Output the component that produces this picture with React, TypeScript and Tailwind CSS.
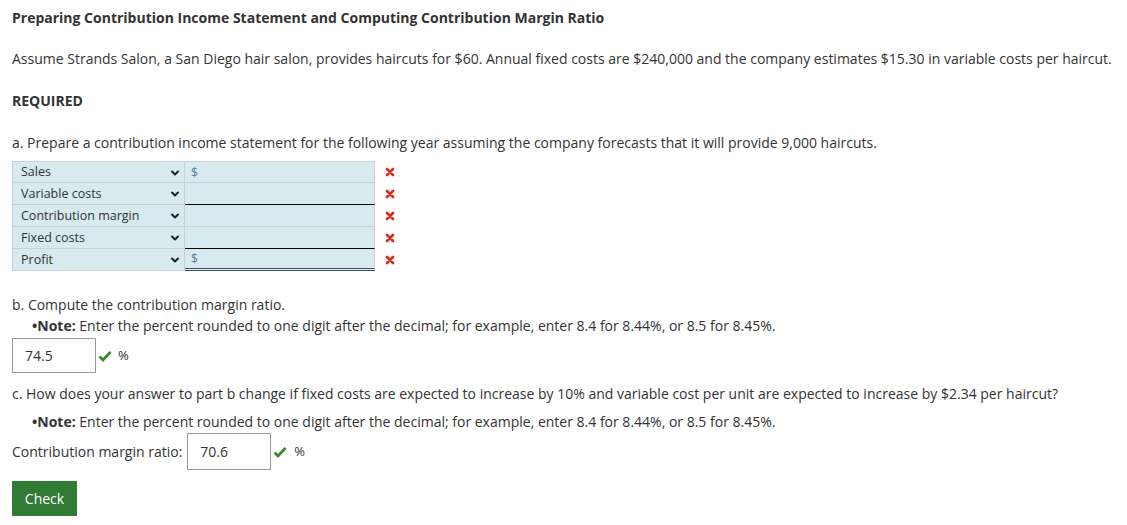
import { ChevronDown } from 'lucide-react';

const rows = [
  { label: 'Sales', dollar: true, line: '' },
  { label: 'Variable costs', dollar: false, line: 'single' },
  { label: 'Contribution margin', dollar: false, line: '' },
  { label: 'Fixed costs', dollar: false, line: 'single' },
  { label: 'Profit', dollar: true, line: 'double' },
];

function Cross() {
  return (
    <svg width="10" height="10" viewBox="0 0 10 10" className="shrink-0">
      <path d="M2 2 L8 8 M8 2 L2 8" stroke="#d4301e" strokeWidth="2.8" strokeLinecap="round" />
    </svg>
  );
}

function Check() {
  return (
    <svg width="14" height="12" viewBox="0 0 14 12" className="shrink-0">
      <path d="M1.5 6.5 L5 10 L12.5 2" fill="none" stroke="#3a8a2a" strokeWidth="2.8" />
    </svg>
  );
}

export default function App() {
  return (
    <div className="min-h-screen bg-white px-3 pt-[8px] text-[14px] text-[#333]" style={{ fontFamily: '"Open Sans", sans-serif' }}>
      <h1 className="text-[14px] font-bold leading-[20px]">Preparing Contribution Income Statement and Computing Contribution Margin Ratio</h1>
      <p className="mt-[21px] leading-[20px]">
        Assume Strands Salon, a San Diego hair salon, provides haircuts for $60. Annual fixed costs are $240,000 and the company estimates $15.30 in variable costs per haircut.
      </p>
      <h2 className="mt-[22px] text-[14px] font-bold leading-[20px]">REQUIRED</h2>
      <p className="mt-[22px] leading-[20px]">a. Prepare a contribution income statement for the following year assuming the company forecasts that it will provide 9,000 haircuts.</p>

      {/* statement table */}
      <div className="mt-[8px] flex flex-col">
        {rows.map((r, i) => (
          <div key={r.label} className="flex items-stretch">
            <div className={`flex h-[22px] w-[173px] items-center justify-between border-l border-[#cfcfcf] bg-[#d6eaf0] pl-2 pr-[3px] pt-[1px] text-[12.5px] ${i === 0 ? 'border-t' : ''} border-b border-r`}>
              <span>{r.label}</span>
              <ChevronDown size={12} strokeWidth={4} className="text-[#222]" />
            </div>
            <div
              className={`flex h-[22px] w-[190px] items-center bg-[#d6eaf0] pl-[6px] pt-[1px] text-[12px] text-[#5a7aa0] border-r border-[#cfcfcf] ${i === 0 ? 'border-t' : ''} ${
                r.line === 'single' ? 'border-b border-b-black' : r.line === 'double' ? 'border-b-[3px] border-double border-b-[#44506a]' : 'border-b'
              }`}
            >
              {r.dollar ? '$' : ''}
            </div>
            <div className="flex w-[20px] items-center justify-end">
              <Cross />
            </div>
          </div>
        ))}
      </div>

      <p className="mt-[24px] leading-[20px]">b. Compute the contribution margin ratio.</p>
      <p className="ml-5 mt-[1px] leading-[20px]">
        <span className="font-bold">•Note:</span> Enter the percent rounded to one digit after the decimal; for example, enter 8.4 for 8.44%, or 8.5 for 8.45%.
      </p>
      <div className="mt-[2px] flex items-center">
        <div className="flex h-[35px] w-[84px] items-center border border-[#999] pl-3">74.5</div>
        <span className="ml-[2px]"><Check /></span>
        <span className="ml-[6px] text-[13px]">%</span>
      </div>

      <p className="mt-[11px] leading-[20px]">c. How does your answer to part b change if fixed costs are expected to increase by 10% and variable cost per unit are expected to increase by $2.34 per haircut?</p>
      <p className="ml-5 mt-[8px] leading-[20px]">
        <span className="font-bold">•Note:</span> Enter the percent rounded to one digit after the decimal; for example, enter 8.4 for 8.44%, or 8.5 for 8.45%.
      </p>
      <div className="mt-[1px] flex items-center">
        <span>Contribution margin ratio:</span>
        <div className="ml-[5px] flex h-[37px] w-[84px] items-center border border-[#999] pl-3">70.6</div>
        <span className="ml-[2px]"><Check /></span>
        <span className="ml-[7px] text-[13px]">%</span>
      </div>

      <button className="mt-[11px] h-[35px] w-[65px] bg-[#317b34] text-[14px] text-white">Check</button>
    </div>
  );
}
